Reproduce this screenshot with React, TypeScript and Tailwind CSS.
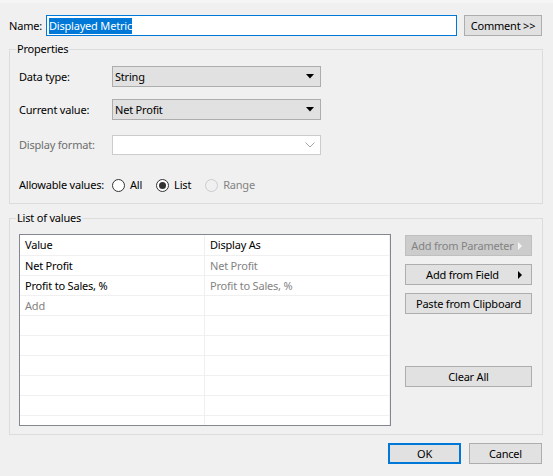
import React from "react";

function Arrow() {
  return (
    <svg width="8" height="5" viewBox="0 0 8 5" className="shrink-0">
      <path d="M0 0 H8 L4 4.5 Z" fill="#000" />
    </svg>
  );
}

function Select({ value, disabled }: { value?: string; disabled?: boolean }) {
  if (disabled) {
    return (
      <div className="flex h-[20px] w-[209px] items-center justify-end border border-[#cccccc] bg-white pr-[5px]">
        <svg width="10" height="6" viewBox="0 0 10 6">
          <path d="M0.5 0.5 L5 5 L9.5 0.5" fill="none" stroke="#a6a6a6" strokeWidth="1" />
        </svg>
      </div>
    );
  }
  return (
    <div className="flex h-[21px] w-[209px] items-center justify-between border border-[#adadad] bg-[#e1e1e1] pl-[2px] pr-[6px]">
      <span>{value}</span>
      <Arrow />
    </div>
  );
}

function Radio({ label, checked, disabled }: { label: string; checked?: boolean; disabled?: boolean }) {
  return (
    <div className="flex items-center gap-[5px]">
      <span
        className={
          "flex h-[13px] w-[13px] items-center justify-center rounded-full border " +
          (disabled ? "border-[#cccccc] bg-[#f0f0f0]" : "border-[#333333] bg-white")
        }
      >
        {checked && <span className="h-[7px] w-[7px] rounded-full bg-[#333333]" />}
      </span>
      <span className={disabled ? "text-[#838383]" : ""}>{label}</span>
    </div>
  );
}

function Btn({ children, disabled, arrow }: { children: React.ReactNode; disabled?: boolean; arrow?: boolean }) {
  return (
    <div
      className={
        "relative flex h-[21px] w-[127px] items-center justify-center border " +
        (disabled ? "border-[#bfbfbf] bg-[#cccccc] text-[#838383]" : "border-[#adadad] bg-[#e1e1e1]")
      }
    >
      <span className={arrow ? "-ml-[12px]" : ""}>{children}</span>
      {arrow && (
        <svg width="4" height="8" viewBox="0 0 4 8" className="absolute right-[9px] top-[6px]">
          <path d="M0 0 L4 4 L0 8 Z" fill={disabled ? "#f5f5f5" : "#000"} />
        </svg>
      )}
    </div>
  );
}

const rows: [string, string, boolean][] = [
  ["Net Profit", "Net Profit", false],
  ["Profit to Sales, %", "Profit to Sales, %", false],
  ["Add", "", true],
  ["", "", false],
  ["", "", false],
  ["", "", false],
  ["", "", false],
  ["", "", false],
  ["", "", false],
];

export default function App() {
  return (
    <div className="h-[476px] w-[553px] overflow-hidden whitespace-nowrap bg-[#f0f0f0] font-['Noto_Sans',sans-serif] text-[11px] leading-[16px] tracking-[-0.2px] text-black">
      <div className="h-[3px] bg-[#f5f5f5]" />

      {/* name row */}
      <div className="flex items-center pl-[9px] pt-[12px]">
        <span className="w-[37px]">Name:</span>
        <div className="flex h-[21px] w-[411px] items-center border border-[#0078d7] bg-white pl-[2px]">
          <span className="bg-[#0078d7] text-white">Displayed Metric</span>
        </div>
        <div className="ml-[7px] flex h-[21px] w-[78px] items-center justify-center border border-[#adadad] bg-[#e1e1e1]">
          Comment &gt;&gt;
        </div>
      </div>

      {/* properties */}
      <fieldset className="ml-[9px] mt-[5px] w-[534px] border border-[#dcdcdc]">
        <legend className="ml-[6px] px-[1px] leading-[16px]">Properties</legend>
        <div className="pb-[10px] pl-[9px] pt-[9px]">
          <div className="flex h-[21px] items-center">
            <span className="w-[93px]">Data type:</span>
            <Select value="String" />
          </div>
          <div className="mt-[12px] flex h-[21px] items-center">
            <span className="w-[93px]">Current value:</span>
            <Select value="Net Profit" />
          </div>
          <div className="mt-[15px] flex h-[20px] items-center">
            <span className="w-[93px] text-[#6d6d6d]">Display format:</span>
            <Select disabled />
          </div>
          <div className="mt-[22px] flex h-[16px] items-center">
            <span className="w-[93px]">Allowable values:</span>
            <div className="flex items-center gap-[14px]">
              <Radio label="All" />
              <Radio label="List" checked />
              <Radio label="Range" disabled />
            </div>
          </div>
        </div>
      </fieldset>

      {/* list of values */}
      <fieldset className="ml-[9px] mt-[6px] w-[534px] border border-[#dcdcdc]">
        <legend className="ml-[6px] px-[1px] leading-[16px]">List of values</legend>
        <div className="flex pb-[8px] pl-[9px] pt-[8px]">
          <div className="h-[192px] w-[372px] overflow-hidden border border-[#828790] bg-white">
            <div className="grid grid-cols-[185px_185px]">
              <div className="flex h-[21px] items-center border-b border-r border-[#f0f0f0] pl-[5px]">Value</div>
              <div className="flex h-[21px] items-center border-b border-r border-[#f0f0f0] pl-[5px]">Display As</div>
              {rows.map(([v, d, muted], i) => (
                <React.Fragment key={i}>
                  <div
                    className={
                      "flex h-[20px] items-center border-b border-r border-[#f0f0f0] pl-[5px] " +
                      (muted ? "text-[#838383]" : "")
                    }
                  >
                    {v}
                  </div>
                  <div className="flex h-[20px] items-center border-b border-r border-[#f0f0f0] pl-[5px] text-[#838383]">
                    {d}
                  </div>
                </React.Fragment>
              ))}
            </div>
          </div>
          <div className="ml-[14px] flex flex-col pt-[1px]">
            <Btn disabled arrow>
              Add from Parameter
            </Btn>
            <div className="mt-[8px]">
              <Btn arrow>Add from Field</Btn>
            </div>
            <div className="mt-[8px]">
              <Btn>Paste from Clipboard</Btn>
            </div>
            <div className="mt-[52px]">
              <Btn>Clear All</Btn>
            </div>
          </div>
        </div>
      </fieldset>

      {/* footer */}
      <div className="mt-[8px] flex justify-end gap-[8px] pr-[11px]">
        <div className="flex h-[21px] w-[73px] items-center justify-center border-2 border-[#0078d7] bg-[#e1e1e1]">OK</div>
        <div className="flex h-[21px] w-[73px] items-center justify-center border border-[#adadad] bg-[#e1e1e1]">Cancel</div>
      </div>
    </div>
  );
}
